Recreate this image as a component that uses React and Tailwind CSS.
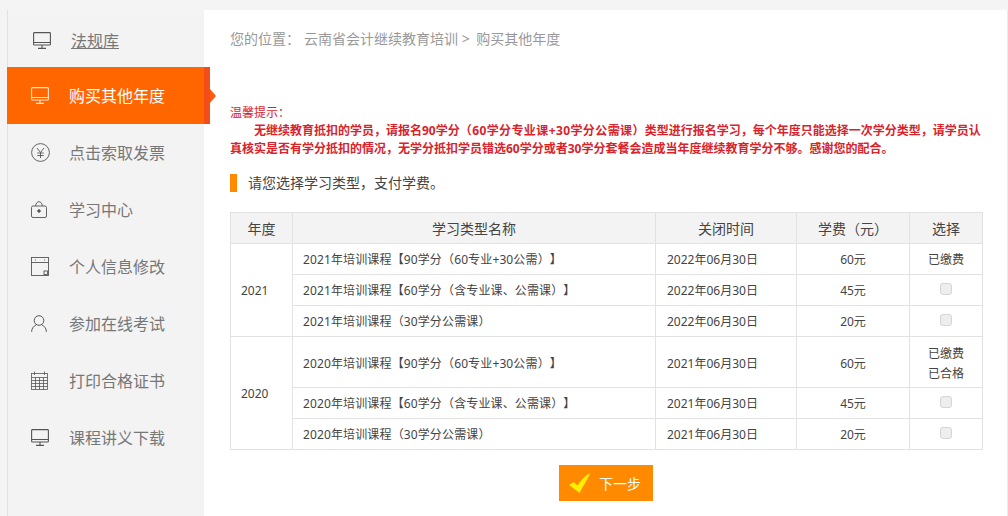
import React from "react";

const FONT = "font-['Noto_Sans','Noto_Sans_CJK_SC',sans-serif] [text-spacing-trim:space-all]";

function Monitor({ className = "" }) {
  return (
    <svg width="18" height="17" viewBox="0 0 18 17" fill="none" stroke="currentColor" strokeWidth="1.1" className={className}>
      <rect x="0.6" y="0.6" width="16.8" height="12.4" rx="0.8" />
      <path d="M0.6 10.5h16.8M9 13v3M5 16.4h8" />
    </svg>
  );
}

function Yuan() {
  return (
    <svg width="19" height="19" viewBox="0 0 19 19" fill="none" stroke="currentColor" strokeWidth="0.9">
      <circle cx="9.500" cy="9.500" r="8.900" />
      <path d="M6 5 9.500 9.500 13 5M9.500 9.500v5.500M6.300 10h6.400M6.300 12.500h6.400" />
    </svg>
  );
}

function Lock() {
  return (
    <svg width="16" height="17" viewBox="0 0 16 17" fill="none" stroke="currentColor" strokeWidth="0.9">
      <rect x="0.500" y="5" width="15" height="11.500" rx="1.500" />
      <path d="M4.500 5C5 2 6.500 0.700 8 0.700S11 2 11.500 5" />
      <circle cx="8" cy="10" r="1.300" fill="currentColor" />
    </svg>
  );
}

function Card() {
  return (
    <svg width="18" height="19" viewBox="0 0 18 19" fill="none" stroke="currentColor" strokeWidth="0.9">
      <rect x="0.500" y="0.500" width="17" height="18" />
      <path d="M0.500 5.500h17M4 3h1M13 3h1" />
      <rect x="13" y="14" width="3.500" height="3.500" />
    </svg>
  );
}

function User() {
  return (
    <svg width="16" height="17" viewBox="0 0 16 17" fill="none" stroke="currentColor" strokeWidth="1">
      <circle cx="8" cy="5.500" r="4.800" />
      <path d="M0.600 16.800c0-3.500 2.400-6 4.400-6.800M15.400 16.800c0-3.500-2.400-6-4.400-6.800" />
    </svg>
  );
}

function Calendar() {
  return (
    <svg width="17" height="19" viewBox="0 0 17 19" fill="none" stroke="currentColor" strokeWidth="0.8">
      <rect x="0.500" y="2.500" width="16" height="16" />
      <path d="M0.500 6.500h16M0.500 9.500h16M0.500 12.500h16M0.500 15.500h16M4.500 6.500v12M8.500 6.500v12M12.500 6.500v12" />
      <path d="M3.500 0.500v3.500M13.500 0.500v3.500" />
    </svg>
  );
}

const NAV = [
  { label: "法规库", icon: <Monitor className="ml-[2px]" />, link: true },
  { label: "购买其他年度", icon: <Monitor />, active: true },
  { label: "点击索取发票", icon: <Yuan /> },
  { label: "学习中心", icon: <Lock /> },
  { label: "个人信息修改", icon: <Card /> },
  { label: "参加在线考试", icon: <User /> },
  { label: "打印合格证书", icon: <Calendar /> },
  { label: "课程讲义下载", icon: <Monitor /> },
];

const YEARS = [
  {
    year: "2021",
    close: "2022年06月30日",
    rows: [
      { name: "2021年培训课程【90学分（60专业+30公需）】", fee: "60元", paid: true },
      { name: "2021年培训课程【60学分（含专业课、公需课）】", fee: "45元" },
      { name: "2021年培训课程（30学分公需课）", fee: "20元" },
    ],
  },
  {
    year: "2020",
    close: "2021年06月30日",
    rows: [
      { name: "2020年培训课程【90学分（60专业+30公需）】", fee: "60元", paid: true, passed: true },
      { name: "2020年培训课程【60学分（含专业课、公需课）】", fee: "45元" },
      { name: "2020年培训课程（30学分公需课）", fee: "20元" },
    ],
  },
];

function Sidebar() {
  return (
    <aside className="w-[197px] shrink-0 bg-[#f3f3f3] border-l border-[#e2e2e2] pb-[49px]">
      {NAV.map((item) => (
        <div
          key={item.label}
          className={`relative h-[57px] flex items-center text-[16px] ${
            item.active ? "bg-[#ff6600] text-white -ml-px pl-[24px]" : "text-[#777] pl-[23px]"
          } ${item.link ? "pt-[4px]" : ""}`}
        >
          <span className={`w-[38px] shrink-0 flex items-center ${item.active ? "text-[#ffe6d0]" : "text-[#555]"}`}>
            {item.icon}
          </span>
          <span className={item.link ? "underline ml-[2px]" : ""}>{item.label}</span>
          {item.active && (
            <span className="absolute left-[197px] top-0 h-full w-[6px] bg-[#f34e19]">
              <span className="absolute left-[6px] top-[22px] border-y-[7px] border-l-[6px] border-y-transparent border-l-[#fb5a10]" />
            </span>
          )}
        </div>
      ))}
    </aside>
  );
}

function CourseTable() {
  const th = "border border-[#e2e2e2] font-normal text-[14px] text-[#444] bg-[#f3f3f3] h-[31px] p-0";
  const td = "border border-[#e2e2e2] text-[12px] text-[#444] px-0 pb-0 text-center";
  return (
    <table className="w-[752px] table-fixed border-collapse">
      <colgroup>
        <col className="w-[62px]" />
        <col className="w-[363px]" />
        <col className="w-[141px]" />
        <col className="w-[113px]" />
        <col className="w-[73px]" />
      </colgroup>
      <thead>
        <tr>
          <th className={th}>年度</th>
          <th className={th}>学习类型名称</th>
          <th className={th}>关闭时间</th>
          <th className={th}>学费（元）</th>
          <th className={th}>选择</th>
        </tr>
      </thead>
      <tbody>
        {YEARS.map((y) =>
          y.rows.map((r, i) => {
            const pad = r.passed ? "pt-[4px]" : "pt-[2px]";
            return (
              <tr key={r.name} className={r.passed ? "h-[51px]" : "h-[31px]"}>
                {i === 0 && (
                  <td rowSpan={3} className={`${td} pt-[2px] text-left pl-[10px]`}>
                    {y.year}
                  </td>
                )}
                <td className={`${td} ${pad} text-left pl-[10px] tracking-[0.13px]`}>{r.name}</td>
                <td className={`${td} ${pad} text-left pl-[11px]`}>{y.close}</td>
                <td className={`${td} ${pad}`}>{r.fee}</td>
                <td className={`${td} ${r.paid ? pad : "pt-0"} leading-[20px]`}>
                  {r.paid ? (
                    <>
                      <div>已缴费</div>
                      {r.passed && <div>已合格</div>}
                    </>
                  ) : (
                    <span className="inline-block align-middle w-[12px] h-[12px] mb-[3px] rounded-[3px] border border-[#d5d5d5] bg-[#eeeeee]" />
                  )}
                </td>
              </tr>
            );
          })
        )}
      </tbody>
    </table>
  );
}

export default function App() {
  return (
    <div className={`${FONT} bg-[#f4f4f4] h-[516px] overflow-hidden pt-[10px] pl-[7px] flex`}>
      <Sidebar />
      <main className="flex-1 bg-white pl-[26px] border-r border-[#ececec]">
        <div className="pt-[20px] text-[14px] leading-[18px] text-[#999]">
          <span>您的位置：</span>
          <span className="ml-[4px]">
            云南省会计继续教育培训 &gt; <span className="ml-[3px]">购买其他年度</span>
          </span>
        </div>
        <div className="mt-[56px] w-[752px] text-[12px] leading-[18px] text-[#d9232b]">
          <p>温馨提示：</p>
          <p className="font-bold indent-[24px]">
            无继续教育抵扣的学员，请报名90学分
            <span className="tracking-[0.4px]">（60学分专业课+30学分公需课）</span>
            类型进行报名学习，每个年度只能选择一次学分类型，请学员认真核实是否有学分抵扣的情况，无学分抵扣学员错选60学分或者30学分套餐会造成当年度继续教育学分不够。感谢您的配合。
          </p>
        </div>
        <div className="mt-[16px] flex items-center h-[18px] text-[14px] text-[#444]">
          <span className="w-[7px] h-[18px] bg-[#ff8a00] mr-[11px]" />
          <span className="-mt-[2px]">请您选择学习类型，支付学费。</span>
        </div>
        <div className="mt-[20px]">
          <CourseTable />
        </div>
        <div className="mt-[15px] w-[752px] flex justify-center">
          <button className="w-[94px] h-[36px] bg-[#ff8a00] text-white text-[14px] flex items-center pl-[10px] gap-[8px]">
            <svg width="22" height="21" viewBox="0 0 22 21">
              <path d="M0 12 4.500 9 8.500 12.500C11 8 15 3.500 21 0 19 6 14 13 10.500 20 7.500 17.500 3.500 14.500 0 12Z" fill="#ffef00" />
            </svg>
            下一步
          </button>
        </div>
      </main>
    </div>
  );
}
